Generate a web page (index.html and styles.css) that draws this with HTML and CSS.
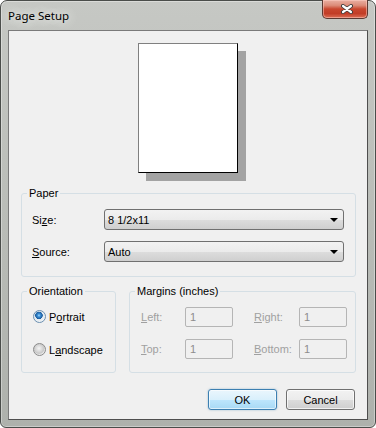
FILE: index.html
```html
<!DOCTYPE html>
<html lang="en">
<head>
    <meta charset="UTF-8">
    <meta name="viewport" content="width=device-width, initial-scale=1.0">
    <title>Page Setup</title>
    <link rel="stylesheet" href="styles.css">
</head>
<body>
    <div class="window">
        <!-- Title bar -->
        <div class="titlebar">
            <span class="title">Page Setup</span>
            <button class="close-btn" title="Close">
                <svg width="12" height="10" viewBox="-6 -5 12 10">
                    <path d="M-4 -3 L4 3 M4 -3 L-4 3" stroke="#3b3b3b" stroke-width="4" stroke-linecap="round"/>
                    <path d="M-4 -3 L4 3 M4 -3 L-4 3" stroke="#ffffff" stroke-width="2.2" stroke-linecap="round"/>
                </svg>
            </button>
        </div>

        <div class="client">
            <!-- Page preview -->
            <div class="preview">
                <div class="page"></div>
            </div>

            <fieldset class="group paper">
                <legend>Paper</legend>
                <div class="paper-grid">
                    <label>Si<u>z</u>e:</label>
                    <div class="combo"><span>8 1/2x11</span><span class="arrow"></span></div>
                    <label><u>S</u>ource:</label>
                    <div class="combo"><span>Auto</span><span class="arrow"></span></div>
                </div>
            </fieldset>

            <div class="lower">
                <fieldset class="group orientation">
                    <legend>Orientation</legend>
                    <div class="radios">
                        <div class="radio-row"><span class="radio checked"></span><span>P<u>o</u>rtrait</span></div>
                        <div class="radio-row"><span class="radio"></span><span>L<u>a</u>ndscape</span></div>
                    </div>
                </fieldset>

                <fieldset class="group margins">
                    <legend>Margins (inches)</legend>
                    <div class="margin-grid">
                        <span class="off"><u>L</u>eft:</span>
                        <div class="textbox">1</div>
                        <span></span>
                        <span class="off"><u>R</u>ight:</span>
                        <div class="textbox">1</div>
                        <span class="off"><u>T</u>op:</span>
                        <div class="textbox">1</div>
                        <span></span>
                        <span class="off"><u>B</u>ottom:</span>
                        <div class="textbox">1</div>
                    </div>
                </fieldset>
            </div>

            <div class="buttons">
                <button class="btn default">OK</button>
                <button class="btn">Cancel</button>
            </div>
        </div>
    </div>
</body>
</html>
```

FILE: styles.css
```css
body {
    margin: 0;
    background: #ffffff;
    font-family: 'Liberation Sans', Arial, sans-serif;
    font-size: 11px;
    color: #000;
}
.window {
    width: 376px;
    height: 428px;
    box-sizing: border-box;
    border: 1px solid #4a4d4a;
    border-radius: 7px 7px 6px 6px;
    background: linear-gradient(180deg, #c6c8c4 0%, #bcbfba 40%, #aeb1ac 100%);
    box-shadow: inset 0 0 0 1px rgba(255, 255, 255, 0.35);
    display: flex;
    flex-direction: column;
    padding: 0 7px 7px 7px;
}
.titlebar {
    height: 29px;
    display: flex;
    justify-content: space-between;
    align-items: flex-start;
}
.title {
    font-family: 'Noto Sans', sans-serif;
    font-size: 11.5px;
    line-height: 14px;
    margin-top: 8px;
    color: #000;
    text-shadow: 0 0 6px #e6e7e4, 0 0 10px #e6e7e4, 0 0 14px #e6e7e4;
}
.close-btn {
    width: 46px;
    height: 19px;
    margin-top: -1px;
    padding: 0 0 0 3px;
    border: 1px solid #5b3a33;
    border-top: none;
    border-radius: 0 0 5px 5px;
    background: linear-gradient(180deg, #eab0a3 0%, #dc8c79 30%, #c9472f 50%, #c23d27 75%, #dc6e55 100%);
    box-shadow: inset 0 0 0 1px rgba(255, 210, 200, 0.5);
    display: flex;
    align-items: center;
    justify-content: center;
}
.client {
    width: 360px;
    height: 390px;
    box-sizing: border-box;
    background: #f0f0f0;
    border: 1px solid #7a7a7a;
    border-right-color: #4e4e4e;
    border-bottom-color: #4e4e4e;
    display: flex;
    flex-direction: column;
}
.preview {
    height: 156px;
    box-sizing: border-box;
    padding-top: 12px;
    display: flex;
    justify-content: center;
}
.page {
    width: 100px;
    height: 130px;
    box-sizing: border-box;
    background: #ffffff;
    border: 1px solid #808080;
    border-right-color: #000;
    border-bottom-color: #000;
    box-shadow: 8px 8px 0 #a3a3a3;
}
.group {
    margin: 0;
    padding: 0;
    min-width: 0;
    border: 1px solid #d5dfe5;
    border-radius: 3px;
    box-sizing: border-box;
}
.group legend {
    font-size: 11px;
    line-height: 13px;
    padding: 0 2px;
    margin-left: 5px;
}
.paper {
    margin: 0 11px 0 12px;
    height: 90px;
}
.paper-grid {
    display: grid;
    grid-template-columns: 72px 1fr;
    grid-auto-rows: 21px;
    row-gap: 11px;
    align-items: center;
    padding: 9px 11px 0 10px;
}
.combo {
    height: 21px;
    box-sizing: border-box;
    border: 1px solid #707070;
    border-radius: 3px;
    background: linear-gradient(180deg, #f2f2f2 0%, #ebebeb 50%, #dddddd 51%, #cfcfcf 100%);
    display: flex;
    align-items: center;
    justify-content: space-between;
    padding: 0 5px 0 3px;
}
.arrow {
    width: 0;
    height: 0;
    border-left: 4px solid transparent;
    border-right: 4px solid transparent;
    border-top: 4px solid #000;
    margin-top: 1px;
}
.lower {
    display: flex;
    gap: 13px;
    margin: 8px 11px 0 12px;
}
.orientation {
    width: 95px;
    height: 88px;
}
.margins {
    flex: 1;
    height: 88px;
}
.radios {
    display: flex;
    flex-direction: column;
    gap: 20px;
    padding: 12px 0 0 11px;
}
.radio-row {
    height: 13px;
    display: flex;
    align-items: center;
    gap: 3px;
}
.radio {
    width: 13px;
    height: 13px;
    box-sizing: border-box;
    border-radius: 50%;
    border: 1px solid #8a8a8a;
    background: radial-gradient(circle at 45% 40%, #f4f4f4 0, #dadada 3px, #c8c8c8 5px, #e8e8e8 6px);
}
.radio.checked {
    border-color: #6a8fb0;
    background: radial-gradient(circle at 45% 40%, #a6dcff 0, #3b8fd6 1.5px, #1b5b9c 3.5px, #dfe8ef 4px, #eef2f5 6px);
}
.margin-grid {
    display: grid;
    grid-template-columns: 44px 48px 21px 45px 48px;
    grid-auto-rows: 20px;
    row-gap: 12px;
    align-items: center;
    padding: 9px 0 0 11px;
}
.off {
    color: #a0a0a0;
}
.textbox {
    height: 20px;
    box-sizing: border-box;
    border: 1px solid #b5b5b5;
    border-radius: 2px;
    background: #f0f0f0;
    color: #8d8d8d;
    padding: 1px 0 0 4px;
    line-height: 16px;
}
.buttons {
    display: flex;
    justify-content: flex-end;
    gap: 9px;
    margin: 16px 12px 0 0;
}
.btn {
    width: 69px;
    height: 21px;
    padding: 0;
    font-family: 'Liberation Sans', Arial, sans-serif;
    font-size: 11px;
    color: #000;
    border: 1px solid #707070;
    border-radius: 3px;
    background: linear-gradient(180deg, #f2f2f2 0%, #ebebeb 50%, #dddddd 51%, #cfcfcf 100%);
    box-shadow: inset 0 0 0 1px rgba(255, 255, 255, 0.7);
}
.btn.default {
    border-color: #3c7fb1;
    background: linear-gradient(180deg, #eaf6fd 0%, #d9f0fc 50%, #bee6fd 51%, #a7d9f5 100%);
    box-shadow: inset 0 0 0 1px rgba(255, 255, 255, 0.6), 0 0 2px rgba(60, 127, 177, 0.5);
}
```
